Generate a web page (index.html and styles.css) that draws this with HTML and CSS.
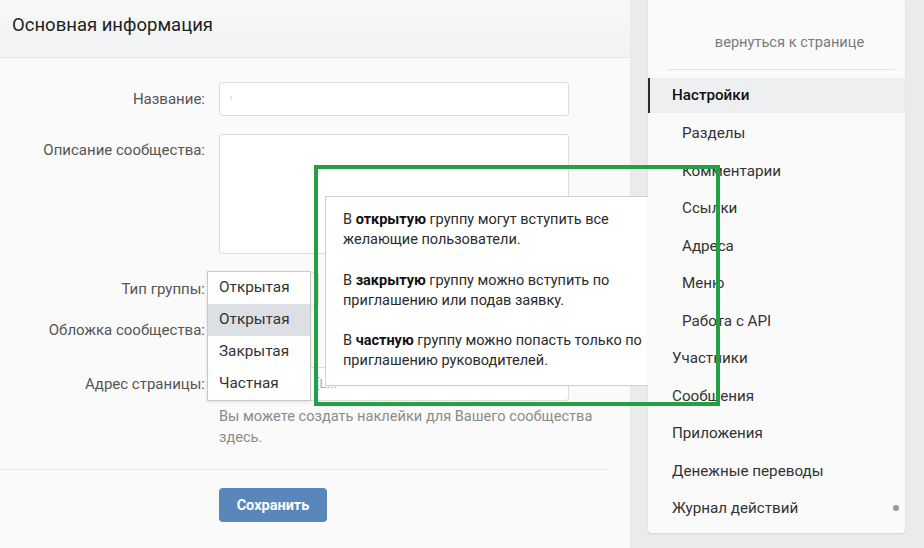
FILE: index.html
```html
<!DOCTYPE html>
<html lang="ru">
<head>
<meta charset="utf-8">
<link rel="stylesheet" href="styles.css">
</head>
<body>
<div class="page">
  <main class="main">
    <div class="main-head">Основная информация</div>
    <div class="form">
      <div class="row">
        <div class="label">Название:</div>
        <div class="field"><div class="input"><span class="caret"></span></div></div>
      </div>
      <div class="row">
        <div class="label label-top">Описание сообщества:</div>
        <div class="field"><div class="textarea"></div></div>
      </div>
      <div class="row">
        <div class="label">Тип группы:</div>
        <div class="field"><div class="select"></div></div>
      </div>
      <div class="row row-cover">
        <div class="label">Обложка сообщества:</div>
        <div class="field"></div>
      </div>
      <div class="row row-addr">
        <div class="label">Адрес страницы:</div>
        <div class="field"><div class="input addr"><span class="addr-text">[L...</span></div></div>
      </div>
      <div class="row row-hint">
        <div class="label"></div>
        <div class="field hint">Вы можете создать наклейки для Вашего сообщества здесь.</div>
      </div>
    </div>
    <div class="sep"></div>
    <div class="actions"><button class="btn">Сохранить</button></div>

    <ul class="dropdown">
      <li>Открытая</li>
      <li class="hl">Открытая</li>
      <li>Закрытая</li>
      <li>Частная</li>
    </ul>

    <div class="tooltip">
      <p><span class="ln">В <b>открытую</b> группу могут вступить все</span><br><span class="ln">желающие пользователи.</span></p>
      <p><span class="ln">В <b>закрытую</b> группу можно вступить по</span><br><span class="ln">приглашению или подав заявку.</span></p>
      <p><span class="ln">В <b>частную</b> группу можно попасть только по</span><br><span class="ln">приглашению руководителей.</span></p>
    </div>
    <div class="highlight-frame"></div>
  </main>

  <aside class="side">
    <div class="back">вернуться к странице</div>
    <div class="side-sep"></div>
    <ul class="menu">
      <li class="active">Настройки</li>
      <li class="sub">Разделы</li>
      <li class="sub">Комментарии</li>
      <li class="sub">Ссылки</li>
      <li class="sub">Адреса</li>
      <li class="sub">Меню</li>
      <li class="sub">Работа с API</li>
      <li>Участники</li>
      <li>Сообщения</li>
      <li>Приложения</li>
      <li>Денежные переводы</li>
      <li class="with-dot">Журнал действий<span class="dot"></span></li>
    </ul>
  </aside>
</div>
</body>
</html>
```

FILE: styles.css
```css
* { box-sizing: border-box; }
html, body { margin: 0; padding: 0; }
body {
  background: #ebebeb;
  font-family: Roboto, "Noto Sans", "DejaVu Sans", sans-serif;
  color: #2a2a2a;
  width: 924px;
  height: 548px;
  overflow: hidden;
}
.page {
  display: flex;
  gap: 18px;
  align-items: flex-start;
}
.main {
  position: relative;
  width: 630px;
  height: 548px;
  background: #fafafa;
}
.main-head {
  height: 58px;
  padding: 14px 0 0 12px;
  font-size: 18.5px;
  color: #222;
  background: linear-gradient(#f7f8f8, #f1f2f3);
  border-bottom: 1px solid #e6e7e8;
}
.form {
  display: flex;
  flex-direction: column;
  gap: 18px;
  padding-top: 24px;
}
.row {
  display: flex;
  gap: 14px;
  min-height: 34px;
}
.label {
  width: 205px;
  text-align: right;
  font-size: 15px;
  color: #555;
  line-height: 34px;
  flex: none;
}
.label-top { line-height: 32px; }
.field { width: 350px; }
.input {
  height: 34px;
  border: 1px solid #dcdcdc;
  border-radius: 3px;
  background: #fff;
  position: relative;
}
.caret {
  position: absolute;
  left: 10px;
  top: 13px;
  width: 2px;
  height: 4px;
  background: #e6e6e6;
}
.textarea {
  height: 120px;
  border: 1px solid #dcdcdc;
  border-radius: 3px;
  background: #fff;
}
.select {
  height: 34px;
  width: 100px;
  border: 1px solid #dcdcdc;
  border-radius: 3px;
  background: #fff;
}
.row-cover { margin-top: -11px; }
.row-addr { margin-top: 2px; }
.addr-text {
  position: absolute;
  left: 96px;
  top: 8px;
  font-size: 13px;
  color: #aaa;
}
.row-hint { margin-top: -13px; }
.hint {
  width: 400px;
  font-size: 14.6px;
  color: #8b8b8b;
  line-height: 21px;
}
.sep {
  margin-top: 21px;
  width: 607px;
  height: 1px;
  background: #e4e4e4;
}
.actions {
  padding: 18px 0 0 219px;
}
.btn {
  width: 108px;
  height: 34px;
  border: none;
  border-radius: 4px;
  background: #5a87bb;
  color: #fff;
  font-family: Roboto, "Noto Sans", sans-serif;
  font-weight: 700;
  font-size: 14.5px;
  padding: 0;
}

.dropdown {
  position: absolute;
  left: 207px;
  top: 271px;
  width: 104px;
  margin: 0;
  padding: 0;
  list-style: none;
  background: #fff;
  border: 1px solid #c9c9c9;
  box-shadow: 0 1px 3px rgba(0,0,0,0.12);
}
.dropdown li {
  height: 32px;
  line-height: 31px;
  padding-left: 11px;
  font-size: 15.3px;
  color: #333;
}
.dropdown li.hl { background: #dcdfe3; }

.tooltip {
  position: absolute;
  left: 325px;
  top: 196px;
  width: 352px;
  height: 190px;
  background: #fff;
  border: 1px solid #cfcfcf;
  padding: 13px 20px 0 17px;
  font-size: 14.5px;
  line-height: 20px;
  color: #2b2b2b;
}
.tooltip p { margin: 0 0 20.5px 0; }
.tooltip .ln { white-space: nowrap; }
.tooltip b { font-weight: 700; color: #111; }

.highlight-frame {
  position: absolute;
  left: 314px;
  top: 165px;
  width: 406px;
  height: 241px;
  border: 4px solid #23a043;
  z-index: 5;
}

.side {
  position: relative;
  width: 257px;
  height: 533px;
  background: #fafafa;
  box-shadow: 0 1px 2px rgba(0,0,0,0.1);
  border-radius: 0 0 4px 4px;
}
.back {
  height: 69px;
  padding: 33px 0 0 26px;
  text-align: center;
  font-size: 14.6px;
  color: #7a7a7a;
}
.side-sep {
  margin: 0 10px 0 20px;
  height: 1px;
  background: #e3e3e3;
}
.menu {
  list-style: none;
  margin: 8px 0 0 0;
  padding: 0;
}
.menu li {
  height: 37.5px;
  line-height: 39px;
  padding-left: 24px;
  font-size: 15.2px;
  color: #333;
  position: relative;
}
.menu li.active {
  height: 35px;
  line-height: 35px;
  margin-bottom: 1px;
  background: #eeeff0;
  border-left: 2px solid #2b2b2b;
  padding-left: 22px;
  font-weight: 500;
  color: #111;
}
.menu li.sub { padding-left: 34px; }
.dot {
  position: absolute;
  right: 6px;
  top: 16px;
  width: 6px;
  height: 6px;
  border-radius: 50%;
  background: #8c9db2;
}
```
